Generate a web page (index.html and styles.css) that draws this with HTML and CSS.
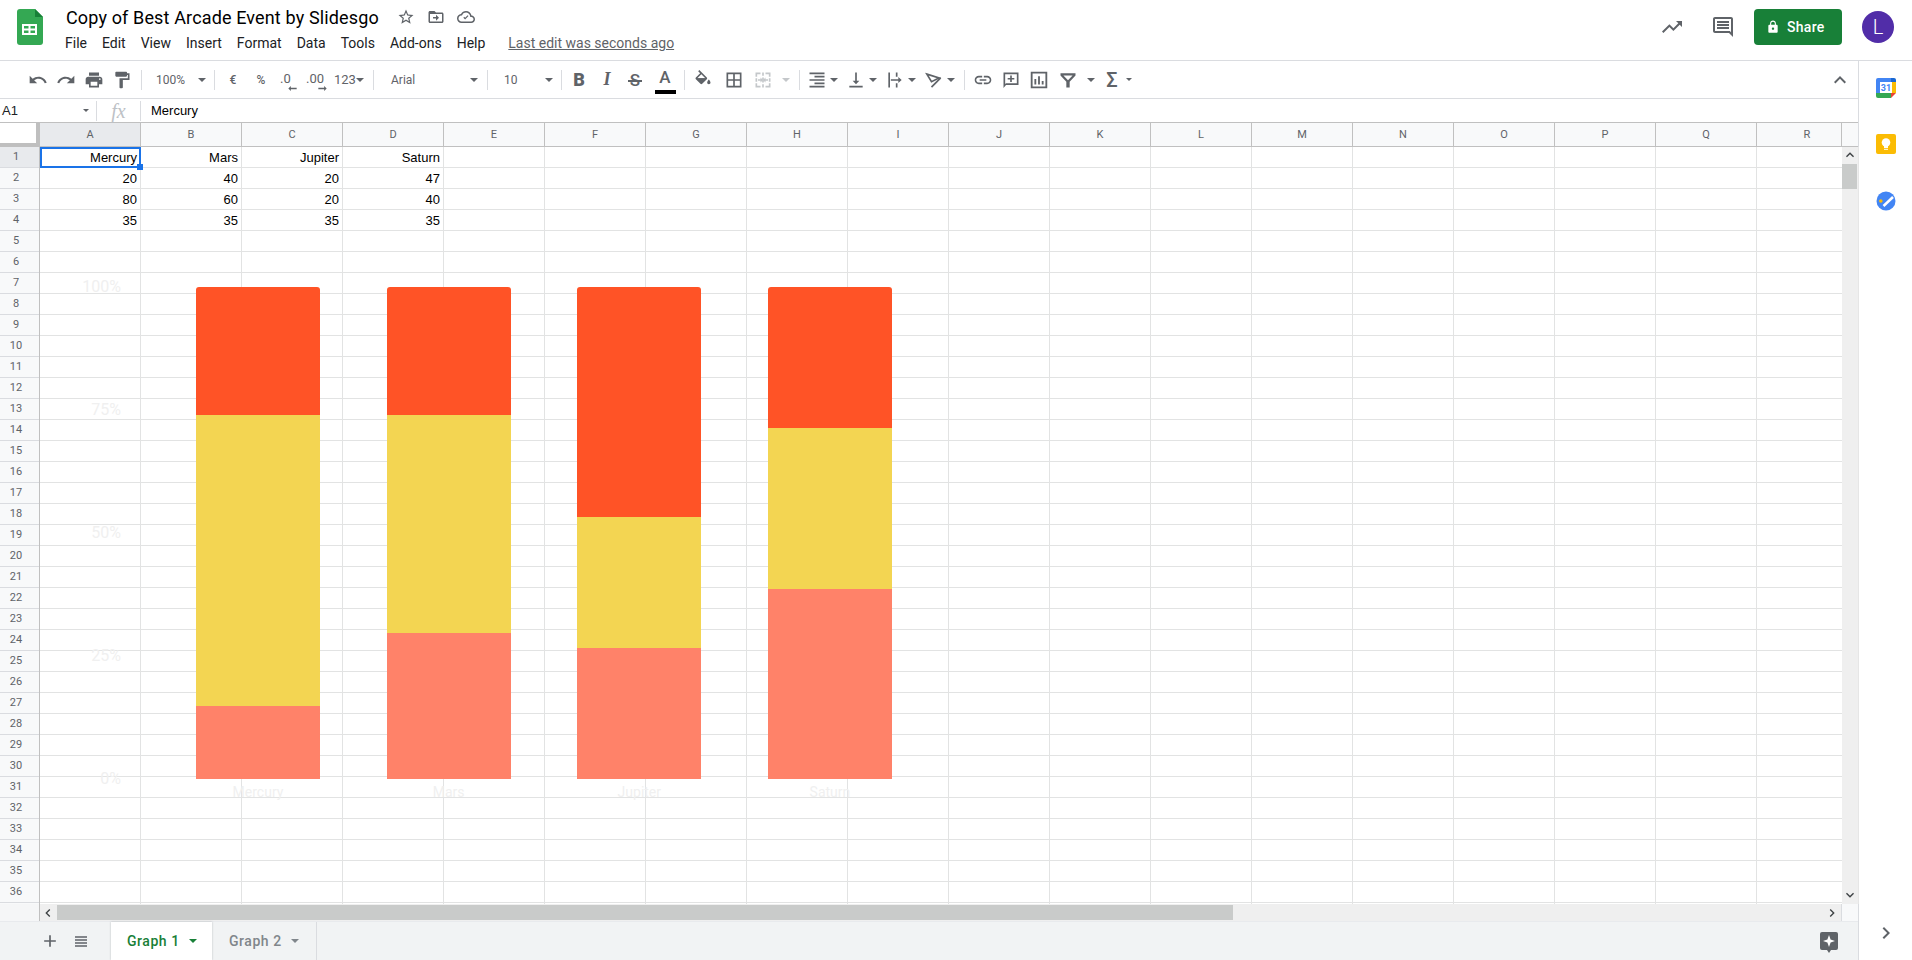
FILE: index.html
```html
<!DOCTYPE html>
<html lang="en">
<head>
    <meta charset="UTF-8">
    <title>Copy of Best Arcade Event by Slidesgo - Google Sheets</title>
    <link rel="stylesheet" href="styles.css">
</head>
<body>
<div class="app">
    <header class="header">
        <svg class="logo" viewBox="0 0 26 36" width="26" height="36">
            <path d="M3 0h15l8 8v25a3 3 0 0 1-3 3H3a3 3 0 0 1-3-3V3a3 3 0 0 1 3-3z" fill="#34a853"/>
            <path d="M18 0l8 8h-8z" fill="#188038"/>
            <path fill-rule="evenodd" d="M5 15h15v11H5zM7 17v2.500h4.500V17zM13.500 17v2.500H18V17zM7 21.500V24h4.500v-2.500zM13.500 21.500V24H18v-2.500z" fill="#fff"/>
        </svg>
        <div class="doc">
            <div class="doc-top">
                <span class="doc-title">Copy of Best Arcade Event by Slidesgo</span>
                <svg class="doc-icon star" viewBox="0 0 24 24"><path d="M22 9.240l-7.190-.620L12 2 9.190 8.630 2 9.240l5.460 4.730L5.820 21 12 17.270 18.180 21l-1.630-7.030L22 9.240zM12 15.400l-3.760 2.270 1-4.280-3.320-2.880 4.380-.380L12 6.100l1.710 4.040 4.380.380-3.320 2.880 1 4.280L12 15.400z"/></svg>
                <svg class="doc-icon" viewBox="0 0 24 24"><path d="M20 6h-8l-2-2H4c-1.100 0-1.990.900-1.990 2L2 18c0 1.100.900 2 2 2h16c1.100 0 2-.900 2-2V8c0-1.100-.900-2-2-2zm0 12H4V8h16v10zm-8-1l4-4-4-4v3H8v2h4v3z"/></svg>
                <svg class="doc-icon" viewBox="0 0 24 24"><path d="M19.350 10.040C18.670 6.590 15.640 4 12 4 9.110 4 6.600 5.640 5.350 8.040 2.340 8.360 0 10.910 0 14c0 3.310 2.690 6 6 6h13c2.760 0 5-2.240 5-5 0-2.640-2.050-4.780-4.650-4.960zM19 18H6c-2.210 0-4-1.790-4-4 0-2.050 1.530-3.760 3.560-3.970l1.070-.110.500-.950C8.080 7.140 9.940 6 12 6c2.620 0 4.880 1.860 5.390 4.430l.300 1.500 1.530.110c1.560.100 2.780 1.410 2.780 2.960 0 1.650-1.350 3-3 3z"/><path d="M10.800 15.200L8.500 12.900l1.100-1.100 1.200 1.200 3.400-3.400 1.100 1.100z"/></svg>
            </div>
            <nav class="menu">
                <span>File</span>
                <span>Edit</span>
                <span>View</span>
                <span>Insert</span>
                <span>Format</span>
                <span>Data</span>
                <span>Tools</span>
                <span>Add-ons</span>
                <span>Help</span>
                <span class="last-edit">Last edit was seconds ago</span>
            </nav>
        </div>
        <div class="header-right">
            <svg class="head-icon" viewBox="0 0 24 24"><path d="M16 6l2.290 2.290-4.880 4.880-4-4L2 16.590 3.410 18l6-6 4 4 6.300-6.290L22 12V6z"/></svg>
            <svg class="head-icon comments" viewBox="0 0 24 24"><path d="M21.990 4c0-1.100-.890-2-1.990-2H4c-1.100 0-2 .900-2 2v12c0 1.100.900 2 2 2h14l4 4-.010-18zM20 4v13.170L18.830 16H4V4h16zM6 12h12v2H6zm0-3h12v2H6zm0-3h12v2H6z"/></svg>
            <button class="share">
                <svg viewBox="0 0 24 24" width="14" height="14"><path d="M18 8h-1V6c0-2.760-2.240-5-5-5S7 3.240 7 6v2H6c-1.100 0-2 .900-2 2v10c0 1.100.900 2 2 2h12c1.100 0 2-.900 2-2V10c0-1.100-.900-2-2-2zm-6 9c-1.100 0-2-.900-2-2s.900-2 2-2 2 .900 2 2-.900 2-2 2zm3.100-9H8.900V6c0-1.710 1.390-3.100 3.100-3.100 1.710 0 3.100 1.390 3.100 3.100v2z"/></svg>
                Share
            </button>
            <div class="avatar">L</div>
        </div>
    </header>

    <div class="workspace">
        <div class="main">
            <div class="toolbar">
                <span class="tb"><svg viewBox="0 0 24 24"><path d="M12.500 8c-2.650 0-5.050.990-6.900 2.600L2 7v9h9l-3.620-3.620c1.390-1.160 3.160-1.880 5.120-1.880 3.540 0 6.550 2.310 7.600 5.500l2.370-.780C21.080 11.030 17.150 8 12.500 8z"/></svg></span>
                <span class="tb"><svg viewBox="0 0 24 24"><path d="M18.400 10.600C16.550 8.990 14.150 8 11.500 8c-4.650 0-8.580 3.030-9.960 7.220L3.900 16c1.050-3.190 4.050-5.500 7.600-5.500 1.950 0 3.730.720 5.120 1.880L13 16h9V7l-3.600 3.600z"/></svg></span>
                <span class="tb"><svg viewBox="0 0 24 24"><path d="M19 8H5c-1.660 0-3 1.340-3 3v6h4v4h12v-4h4v-6c0-1.660-1.340-3-3-3zm-3 11H8v-5h8v5zm3-7c-.550 0-1-.450-1-1s.450-1 1-1 1 .450 1 1-.450 1-1 1zm-1-9H6v4h12V3z"/></svg></span>
                <span class="tb"><svg viewBox="0 0 24 24"><path d="M18 4V3c0-.550-.450-1-1-1H5c-.550 0-1 .450-1 1v4c0 .550.450 1 1 1h12c.550 0 1-.450 1-1V6h1v4H9v11c0 .550.450 1 1 1h2c.550 0 1-.450 1-1v-9h8V4h-3z"/></svg></span>
                <span class="sep"></span>
                <span class="select zoom-select">100%<i class="caret"></i></span>
                <span class="sep"></span>
                <span class="tb tb-text">€</span>
                <span class="tb tb-text">%</span>
                <span class="tb tb-decimal less">.0<svg class="dec-arrow" viewBox="0 0 10 6"><path d="M0 3l3-3v2h7v2H3v2z"/></svg></span>
                <span class="tb tb-decimal more">.00<svg class="dec-arrow" viewBox="0 0 10 6"><path d="M10 3L7 0v2H0v2h7v2z"/></svg></span>
                <span class="select num-select">123<i class="caret"></i></span>
                <span class="sep"></span>
                <span class="select font-select">Arial<i class="caret"></i></span>
                <span class="sep"></span>
                <span class="select size-select">10<i class="caret"></i></span>
                <span class="sep"></span>
                <span class="tb tb-letter bold">B</span>
                <span class="tb tb-letter italic">I</span>
                <span class="tb tb-letter strike">S</span>
                <span class="tb tb-letter color">A<i class="color-bar"></i></span>
                <span class="sep"></span>
                <span class="tb"><svg viewBox="0 0 24 24"><path d="M16.560 8.940L7.620 0 6.210 1.410l2.380 2.380-5.150 5.150c-.590.590-.590 1.540 0 2.120l5.500 5.500c.290.290.680.440 1.060.440s.770-.150 1.060-.440l5.500-5.500c.590-.580.590-1.530 0-2.120zM5.210 10L10 5.210 14.790 10H5.210zM19 11.500s-2 2.170-2 3.500c0 1.100.900 2 2 2s2-.900 2-2c0-1.330-2-3.500-2-3.500z"/><path d="M4 10h12l-6 6z"/></svg></span>
                <span class="tb borders"><svg viewBox="0 0 24 24"><path d="M3 3v18h18V3H3zm8 16H5v-6h6v6zm0-8H5V5h6v6zm8 8h-6v-6h6v6zm0-8h-6V5h6v6z"/></svg></span>
                <span class="tb merge"><svg viewBox="0 0 24 24"><path d="M3 3h6v2H5v3H3zM15 3h6v5h-2V5h-4zM3 16h2v3h4v2H3zM19 16h2v5h-6v-2h4zM3 10h2v4H3zM19 10h2v4h-2zM11 3h2v4h-2zM11 17h2v4h-2zM11 9h2v6h-2z"/><path d="M6 11h3V9l3 3-3 3v-2H6zM18 11h-3V9l-3 3 3 3v-2h3z"/></svg></span>
                <span class="merge-caret"><i class="caret disabled"></i></span>
                <span class="sep"></span>
                <span class="tb-group first">
                    <span class="tb"><svg viewBox="0 0 24 24"><path d="M3 21h18v-2H3v2zm6-4h12v-2H9v2zm-6-4h18v-2H3v2zm6-4h12V7H9v2zM3 3v2h18V3H3z"/></svg></span>
                    <i class="caret"></i>
                </span>
                <span class="tb-group">
                    <span class="tb"><svg viewBox="0 0 24 24"><path d="M16 13h-3V3h-2v10H8l4 4 4-4zM4 19v2h16v-2H4z"/></svg></span>
                    <i class="caret"></i>
                </span>
                <span class="tb-group">
                    <span class="tb"><svg viewBox="0 0 24 24"><path d="M4 3h2v18H4zM13 3h2v5h-2zM13 16h2v5h-2zM7 11h9V8.500l4 3.500-4 3.500V13H7z"/></svg></span>
                    <i class="caret"></i>
                </span>
                <span class="tb-group">
                    <span class="tb"><svg class="rotate" viewBox="0 0 24 24"><path d="M3.500 5L18 9.500 9 14z"/><path d="M20 9.500L9 20.500"/></svg></span>
                    <i class="caret"></i>
                </span>
                <span class="sep"></span>
                <span class="tb"><svg viewBox="0 0 24 24"><path d="M3.900 12c0-1.710 1.390-3.100 3.100-3.100h4V7H7c-2.760 0-5 2.240-5 5s2.240 5 5 5h4v-1.900H7c-1.710 0-3.100-1.390-3.100-3.100zM8 13h8v-2H8v2zm9-6h-4v1.900h4c1.710 0 3.100 1.390 3.100 3.100s-1.390 3.100-3.100 3.100h-4V17h4c2.760 0 5-2.240 5-5s-2.240-5-5-5z"/></svg></span>
                <span class="tb"><svg viewBox="0 0 24 24"><path fill-rule="evenodd" d="M3 3h18v15H6l-3 3.500zM5 5v12l.800-1H19V5z"/><path d="M11 6.500h2V9.500h3v2h-3v3h-2v-3H8v-2h3z"/></svg></span>
                <span class="tb"><svg class="big" viewBox="0 0 24 24"><path fill-rule="evenodd" d="M3 3h18v18H3zM5 5v14h14V5z"/><path d="M7 11h2v6H7zM11 8h2v9h-2zM15 13h2v4h-2z"/></svg></span>
                <span class="tb-group filter">
                    <span class="tb"><svg viewBox="0 0 24 24"><path fill-rule="evenodd" d="M3 4h18v2.500l-7 7.500v7h-4v-7L3 6.500zM6.500 6.500l5.500 5.800 5.500-5.800z"/></svg></span>
                    <i class="caret"></i>
                </span>
                <span class="tb-group sum">
                    <span class="tb tb-letter sigma">Σ</span>
                    <i class="caret small"></i>
                </span>
                <svg class="collapse" viewBox="0 0 24 24"><path d="M7.410 15.410L12 10.830l4.590 4.580L18 14l-6-6-6 6z"/></svg>
            </div>

            <div class="formula-bar">
                <span class="name-box">A1<i class="caret small"></i></span>
                <span class="fx">fx</span>
                <span class="formula">Mercury</span>
            </div>

            <div class="col-heads">
                <div class="corner"></div>
                <div class="col-head active">A</div>
                <div class="col-head">B</div>
                <div class="col-head">C</div>
                <div class="col-head">D</div>
                <div class="col-head">E</div>
                <div class="col-head">F</div>
                <div class="col-head">G</div>
                <div class="col-head">H</div>
                <div class="col-head">I</div>
                <div class="col-head">J</div>
                <div class="col-head">K</div>
                <div class="col-head">L</div>
                <div class="col-head">M</div>
                <div class="col-head">N</div>
                <div class="col-head">O</div>
                <div class="col-head">P</div>
                <div class="col-head">Q</div>
                <div class="col-head last">R</div>
                <div class="col-end"></div>
            </div>

            <div class="grid-wrap">
                <div class="row-heads">
                    <div class="row-head active">1</div>
                    <div class="row-head">2</div>
                    <div class="row-head">3</div>
                    <div class="row-head">4</div>
                    <div class="row-head">5</div>
                    <div class="row-head">6</div>
                    <div class="row-head">7</div>
                    <div class="row-head">8</div>
                    <div class="row-head">9</div>
                    <div class="row-head">10</div>
                    <div class="row-head">11</div>
                    <div class="row-head">12</div>
                    <div class="row-head">13</div>
                    <div class="row-head">14</div>
                    <div class="row-head">15</div>
                    <div class="row-head">16</div>
                    <div class="row-head">17</div>
                    <div class="row-head">18</div>
                    <div class="row-head">19</div>
                    <div class="row-head">20</div>
                    <div class="row-head">21</div>
                    <div class="row-head">22</div>
                    <div class="row-head">23</div>
                    <div class="row-head">24</div>
                    <div class="row-head">25</div>
                    <div class="row-head">26</div>
                    <div class="row-head">27</div>
                    <div class="row-head">28</div>
                    <div class="row-head">29</div>
                    <div class="row-head">30</div>
                    <div class="row-head">31</div>
                    <div class="row-head">32</div>
                    <div class="row-head">33</div>
                    <div class="row-head">34</div>
                    <div class="row-head">35</div>
                    <div class="row-head">36</div>
                </div>

                <div class="sheet">
                    <div class="cells">
                        <div>Mercury</div><div>Mars</div><div>Jupiter</div><div>Saturn</div>
                        <div>20</div><div>40</div><div>20</div><div>47</div>
                        <div>80</div><div>60</div><div>20</div><div>40</div>
                        <div>35</div><div>35</div><div>35</div><div>35</div>
                    </div>
                    <div class="selection"><i class="handle"></i></div>

                    <div class="chart">
                        <div class="y-axis">
                            <span>100%</span>
                            <span>75%</span>
                            <span>50%</span>
                            <span>25%</span>
                            <span>0%</span>
                        </div>
                        <div class="bars">
                            <div class="bar-col">
                                <div class="bar">
                                    <div class="seg red" style="flex-grow:35"></div>
                                    <div class="seg yellow" style="flex-grow:80"></div>
                                    <div class="seg salmon" style="flex-grow:20"></div>
                                </div>
                                <span class="bar-label">Mercury</span>
                            </div>
                            <div class="bar-col">
                                <div class="bar">
                                    <div class="seg red" style="flex-grow:35"></div>
                                    <div class="seg yellow" style="flex-grow:60"></div>
                                    <div class="seg salmon" style="flex-grow:40"></div>
                                </div>
                                <span class="bar-label">Mars</span>
                            </div>
                            <div class="bar-col">
                                <div class="bar">
                                    <div class="seg red" style="flex-grow:35"></div>
                                    <div class="seg yellow" style="flex-grow:20"></div>
                                    <div class="seg salmon" style="flex-grow:20"></div>
                                </div>
                                <span class="bar-label">Jupiter</span>
                            </div>
                            <div class="bar-col">
                                <div class="bar">
                                    <div class="seg red" style="flex-grow:35"></div>
                                    <div class="seg yellow" style="flex-grow:40"></div>
                                    <div class="seg salmon" style="flex-grow:47"></div>
                                </div>
                                <span class="bar-label">Saturn</span>
                            </div>
                        </div>
                    </div>
                </div>

                <div class="vscroll">
                    <svg class="scroll-arrow" viewBox="0 0 24 24"><path d="M7.410 15.410L12 10.830l4.590 4.580L18 14l-6-6-6 6z"/></svg>
                    <div class="vthumb"></div>
                    <svg class="scroll-arrow bottom" viewBox="0 0 24 24"><path d="M7.410 8.590L12 13.170l4.590-4.580L18 10l-6 6-6-6z"/></svg>
                </div>
            </div>

            <div class="hscroll">
                <div class="hscroll-corner"></div>
                <svg class="scroll-arrow" viewBox="0 0 24 24"><path d="M15.410 16.590L10.830 12l4.580-4.590L14 6l-6 6 6 6z"/></svg>
                <div class="hthumb"></div>
                <svg class="scroll-arrow right" viewBox="0 0 24 24"><path d="M8.590 16.590L13.170 12 8.590 7.410 10 6l6 6-6 6z"/></svg>
                <div class="hscroll-end"></div>
            </div>

            <div class="tabs">
                <svg class="tab-tool plus" viewBox="0 0 24 24"><path d="M19 13h-6v6h-2v-6H5v-2h6V5h2v6h6z"/></svg>
                <svg class="tab-tool list" viewBox="0 0 24 24"><path d="M3 5h18v2H3zM3 9.500h18v2H3zM3 14h18v2H3zM3 18.500h18v2H3z"/></svg>
                <div class="tab active">Graph 1<i class="caret"></i></div>
                <div class="tab">Graph 2<i class="caret"></i></div>
                <svg class="explore" viewBox="0 0 18 21"><path d="M2 0h14a2 2 0 0 1 2 2v14a2 2 0 0 1-2 2h-5l-2 3-2-3H2a2 2 0 0 1-2-2V2a2 2 0 0 1 2-2z" fill="#5f6368"/><path d="M9 3l1.600 4.400L15 9l-4.400 1.600L9 15l-1.600-4.400L3 9l4.400-1.600z" fill="#fff"/></svg>
            </div>
        </div>

        <aside class="side">
            <svg viewBox="0 0 20 20" width="20" height="20">
                <path d="M0 2a2 2 0 0 1 2-2h13v4H4v11H0z" fill="#4285f4"/>
                <path d="M15 0h3a2 2 0 0 1 2 2v2h-5z" fill="#1967d2"/>
                <rect x="16" y="4" width="4" height="11" fill="#fbbc04"/>
                <path d="M0 15h15v5H2a2 2 0 0 1-2-2z" fill="#34a853"/>
                <path d="M15 15h5l-5 5z" fill="#ea4335"/>
                <rect x="4" y="4" width="12" height="11" fill="#fff"/>
                <text class="cal-day" x="10" y="13">31</text>
            </svg>
            <svg viewBox="0 0 20 20" width="20" height="20">
                <rect width="20" height="20" rx="2" fill="#fbbc04"/>
                <circle cx="10" cy="8.500" r="4.300" fill="#fff"/>
                <rect x="8" y="12" width="4" height="2" fill="#fff"/>
                <rect x="8" y="14.800" width="4" height="1" fill="#fff"/>
            </svg>
            <svg class="side-tasks" viewBox="0 0 20 20" width="20" height="20">
                <circle cx="10" cy="10" r="9.500" fill="#4285f4"/>
                <path d="M7.500 15L17 6" fill="none" stroke="#fff" stroke-width="2.500"/>
                <circle cx="4.800" cy="10" r="1.800" fill="#fbbc04"/>
            </svg>
            <svg class="side-toggle" viewBox="0 0 24 24" width="24" height="24"><path d="M8.590 16.590L13.170 12 8.590 7.410 10 6l6 6-6 6z" fill="#5f6368"/></svg>
        </aside>
    </div>
</div>
</body>
</html>
```

FILE: styles.css
```css
* {
    box-sizing: border-box;
}
body {
    margin: 0;
    height: 960px;
    overflow: hidden;
    background: #fff;
    font-family: Roboto, "Liberation Sans", sans-serif;
    color: #202124;
}
svg {
    display: block;
    flex: none;
}
.app {
    display: flex;
    flex-direction: column;
    height: 960px;
}

/* header */
.header {
    display: flex;
    height: 61px;
    flex: none;
    border-bottom: 1px solid #dadce0;
}
.logo {
    margin: 9px 0 0 17px;
}
.doc {
    margin-left: 23px;
    padding-top: 5px;
}
.doc-top {
    display: flex;
    align-items: center;
    height: 24px;
}
.doc-title {
    font-size: 18px;
    letter-spacing: .14px;
    color: #000;
    width: 331px;
    white-space: nowrap;
}
.doc-icon {
    width: 18px;
    height: 18px;
    margin-right: 12px;
    fill: #5f6368;
}
.menu {
    display: flex;
    gap: 15px;
    margin: 4px 0 0 -1px;
    font-size: 14px;
    line-height: 20px;
    white-space: nowrap;
}
.last-edit {
    margin-left: 8px;
    color: #5f6368;
    text-decoration: underline;
}
.header-right {
    display: flex;
    align-items: center;
    margin-left: auto;
    height: 54px;
    padding-right: 18px;
}
.head-icon {
    width: 24px;
    height: 24px;
    fill: #5f6368;
}
.head-icon.comments {
    margin-left: 27px;
}
.share {
    display: flex;
    align-items: center;
    gap: 7px;
    width: 88px;
    height: 36px;
    margin-left: 19px;
    padding: 0 0 0 12px;
    border: none;
    border-radius: 4px;
    background: #188038;
    color: #fff;
    font: 500 14px Roboto, sans-serif;
    letter-spacing: .3px;
}
.share svg {
    fill: #fff;
}
.avatar {
    width: 32px;
    height: 32px;
    margin-left: 20px;
    border-radius: 50%;
    background: #512da8;
    color: #fff;
    font-size: 20px;
    font-weight: 300;
    line-height: 32px;
    text-align: center;
}

/* layout */
.workspace {
    display: flex;
    flex: 1;
    min-height: 0;
}
.main {
    display: flex;
    flex-direction: column;
    width: 1858px;
    flex: none;
}
.side {
    display: flex;
    flex-direction: column;
    align-items: center;
    gap: 36px;
    width: 54px;
    padding: 17px 0 15px;
    border-left: 1px solid #dadce0;
}
.side-tasks {
    margin-top: 1px;
}
.side-toggle {
    margin-top: auto;
}
.cal-day {
    font: 700 9px Roboto, sans-serif;
    fill: #4285f4;
    text-anchor: middle;
}

/* toolbar */
.toolbar {
    display: flex;
    align-items: center;
    height: 38px;
    flex: none;
    padding-left: 24px;
    border-bottom: 1px solid #dadce0;
    color: #5f6368;
    font-size: 12px;
}
.tb {
    position: relative;
    display: flex;
    align-items: center;
    justify-content: center;
    width: 28px;
    height: 28px;
    flex: none;
}
.tb svg {
    width: 20px;
    height: 20px;
    fill: #5f6368;
}
.tb svg.big {
    width: 22px;
    height: 22px;
}
.tb svg.rotate path {
    fill: none;
    stroke: #5f6368;
    stroke-width: 2;
}
.tb-text {
    font-size: 12px;
    font-weight: 500;
}
.tb-decimal {
    justify-content: flex-start;
    font-size: 13px;
    padding-bottom: 2px;
}
.tb-decimal.less {
    padding-left: 5px;
}
.tb-decimal.more {
    padding-left: 3px;
}
.tb .dec-arrow {
    position: absolute;
    bottom: 3px;
    width: 9px;
    height: 5px;
}
.less .dec-arrow {
    left: 13px;
}
.more .dec-arrow {
    left: 15px;
}
.tb-letter {
    font-size: 17px;
    font-weight: 500;
}
.bold {
    margin-left: -1px;
    font-size: 18px;
    font-weight: 900;
}
.italic {
    font: italic 700 18px "Liberation Serif", serif;
}
.strike::after {
    content: "";
    position: absolute;
    left: 7px;
    right: 7px;
    top: 14px;
    height: 2px;
    background: #5f6368;
}
.color {
    margin-left: 2px;
    padding-bottom: 6px;
}
.color-bar {
    position: absolute;
    left: 4px;
    right: 3px;
    bottom: 0;
    height: 4px;
    background: #000;
}
.sigma {
    font-size: 20px;
}
.borders {
    margin-left: 3px;
}
.merge {
    margin-left: 1px;
}
.merge svg {
    fill: #c4c7ca;
}
.merge-caret {
    display: flex;
    justify-content: center;
    width: 17px;
}
.sep {
    width: 1px;
    height: 20px;
    flex: none;
    margin: 0 4px 0 5px;
    background: #dadce0;
}
.select {
    display: flex;
    align-items: center;
    height: 28px;
    flex: none;
}
.select .caret {
    margin-left: auto;
}
.zoom-select {
    width: 63px;
    padding: 0 3px 0 10px;
}
.num-select {
    width: 37px;
    padding: 0 4px 0 3px;
    font-size: 13px;
}
.font-select {
    width: 104px;
    padding: 0 4px 0 13px;
}
.size-select {
    width: 64px;
    padding: 0 3px 0 12px;
}
.caret {
    display: block;
    flex: none;
    width: 0;
    height: 0;
    border-style: solid;
    border-width: 4px 4px 0;
    border-color: #5f6368 transparent transparent;
}
.caret.small {
    border-width: 3px 3px 0;
}
.caret.disabled {
    border-top-color: #c4c7ca;
}
.tb-group {
    display: flex;
    align-items: center;
    width: 39px;
    flex: none;
}
.tb-group .caret {
    margin-left: -1px;
}
.tb-group.first {
    margin-left: -1px;
}
.tb-group.filter {
    width: 44px;
    margin-left: 1px;
}
.tb-group.filter .caret {
    margin-left: 5px;
}
.tb-group.sum {
    width: 40px;
}
.tb-group.sum .caret {
    margin-left: 0;
}
.collapse {
    width: 24px;
    height: 24px;
    margin: 0 6px 0 auto;
    fill: #5f6368;
}

/* formula bar */
.formula-bar {
    display: flex;
    align-items: center;
    height: 24px;
    flex: none;
    border-bottom: 1px solid #c0c0c0;
    font-family: "Liberation Sans", Arial, sans-serif;
    font-size: 13px;
}
.name-box {
    display: flex;
    align-items: center;
    justify-content: space-between;
    width: 97px;
    height: 20px;
    padding: 0 7px 0 2px;
    border-right: 1px solid #dadce0;
}
.fx {
    width: 44px;
    height: 20px;
    border-right: 1px solid #dadce0;
    color: #bdc1c6;
    font: italic 20px/20px "Liberation Serif", serif;
    text-align: center;
}
.formula {
    margin-left: 10px;
    color: #000;
}

/* column and row headings */
.col-heads {
    display: flex;
    height: 24px;
    flex: none;
    border-bottom: 1px solid #c0c0c0;
    color: #5f6368;
    font-size: 11px;
    line-height: 23px;
    text-align: center;
}
.corner {
    width: 40px;
    height: 24px;
    margin-bottom: -1px;
    border-right: 4px solid #bfbfbf;
    border-bottom: 4px solid #bfbfbf;
    flex: none;
}
.col-head {
    width: 101px;
    flex: none;
    border-right: 1px solid #c0c0c0;
    background: #f8f9fa;
}
.col-head.active {
    background: #e8eaed;
}
.col-head.last {
    width: 85px;
    padding-left: 16px;
}
.col-end {
    flex: 1;
    background: #f8f9fa;
}
.grid-wrap {
    display: flex;
    height: 757px;
    flex: none;
}
.row-heads {
    width: 40px;
    flex: none;
    overflow: hidden;
    border-right: 1px solid #c0c0c0;
    background: #f8f9fa;
    color: #5f6368;
    font-size: 11px;
}
.row-head {
    height: 21px;
    padding-right: 7px;
    border-bottom: 1px solid #dadce0;
    line-height: 20px;
    text-align: center;
}
.row-head.active {
    background: #e8eaed;
}

/* sheet */
.sheet {
    position: relative;
    width: 1802px;
    flex: none;
    overflow: hidden;
    background-image:
        linear-gradient(to right, transparent 100px, #e2e3e3 100px),
        linear-gradient(to bottom, transparent 20px, #e2e3e3 20px);
    background-size: 101px 21px;
}
.cells {
    display: grid;
    grid-template-columns: repeat(4, 101px);
    grid-auto-rows: 21px;
    font-family: "Liberation Sans", Arial, sans-serif;
    font-size: 13px;
    line-height: 20px;
    color: #000;
    text-align: right;
}
.cells div {
    padding: 1px 4px 0 0;
}
.selection {
    position: absolute;
    top: 0;
    left: 0;
    width: 101px;
    height: 21px;
    border: 2px solid #1a73e8;
}
.handle {
    position: absolute;
    right: -4px;
    bottom: -4px;
    width: 6px;
    height: 6px;
    background: #1a73e8;
}

/* chart, floats over the cells */
.chart {
    position: absolute;
    left: 42px;
    top: 130px;
    display: flex;
    color: #f0f0f0;
}
.y-axis {
    display: flex;
    flex-direction: column;
    justify-content: space-between;
    width: 39px;
    height: 510px;
    margin-top: 1px;
    font-size: 16px;
    line-height: 18px;
    text-align: right;
    white-space: nowrap;
}
.bars {
    display: flex;
    gap: 66.67px;
    margin-left: 75px;
    padding-top: 10px;
}
.bar-col {
    width: 124px;
    text-align: center;
}
.bar {
    display: flex;
    flex-direction: column;
    height: 492px;
    border-radius: 3px 3px 0 0;
    overflow: hidden;
}
.seg {
    flex-basis: 0;
}
.red {
    background: #ff5326;
}
.yellow {
    background: #f3d552;
}
.salmon {
    background: #ff8269;
}
.bar-label {
    display: block;
    margin-top: 4px;
    font-size: 14px;
    line-height: 18px;
}

/* scrollbars */
.vscroll {
    position: relative;
    flex: 1;
    background: #efefef;
    border-right: 1px solid #e6e6e6;
}
.scroll-arrow {
    width: 16px;
    height: 16px;
    fill: #3c4043;
}
.vthumb {
    height: 25px;
    margin: 1px 1px 0 0;
    background: #c9cbca;
}
.scroll-arrow.bottom {
    position: absolute;
    bottom: 1px;
    left: 0;
}
.hscroll {
    display: flex;
    align-items: center;
    height: 17px;
    flex: none;
    background: #efefef;
}
.hscroll-corner {
    width: 40px;
    height: 17px;
    flex: none;
    border-right: 1px solid #c0c0c0;
    background: #f5f6f7;
}
.hthumb {
    width: 1176px;
    height: 15px;
    margin-left: 1px;
    background: #c9cbca;
}
.scroll-arrow.right {
    margin-left: auto;
}
.hscroll-end {
    width: 17px;
    height: 17px;
    flex: none;
    margin-left: 1px;
    border-left: 1px solid #dadce0;
    background: #f8f9fa;
}

/* sheet tabs */
.tabs {
    display: flex;
    align-items: flex-end;
    height: 39px;
    flex: none;
    border-top: 1px solid #e8eaed;
    background: #f1f3f4;
    font-size: 14px;
    font-weight: 500;
    letter-spacing: .55px;
}
.tab-tool {
    align-self: center;
    fill: #5f6368;
}
.plus {
    width: 20px;
    height: 20px;
    margin-left: 40px;
}
.list {
    width: 16px;
    height: 16px;
    margin-left: 13px;
}
.tab {
    display: flex;
    align-items: center;
    gap: 9px;
    width: 103px;
    height: 38px;
    padding-left: 15px;
    border-right: 1px solid #dadce0;
    color: #80868b;
    white-space: nowrap;
}
.tab .caret {
    border-top-color: #80868b;
}
.tab.active {
    width: 101px;
    margin: 0 2px 0 22px;
    padding-left: 16px;
    border-right: none;
    background: #fff;
    color: #188038;
    box-shadow: 0 0 2px rgba(60, 64, 67, .3);
}
.tab.active .caret {
    border-top-color: #188038;
}
.explore {
    width: 18px;
    height: 21px;
    margin: 0 20px 7px auto;
}
```
